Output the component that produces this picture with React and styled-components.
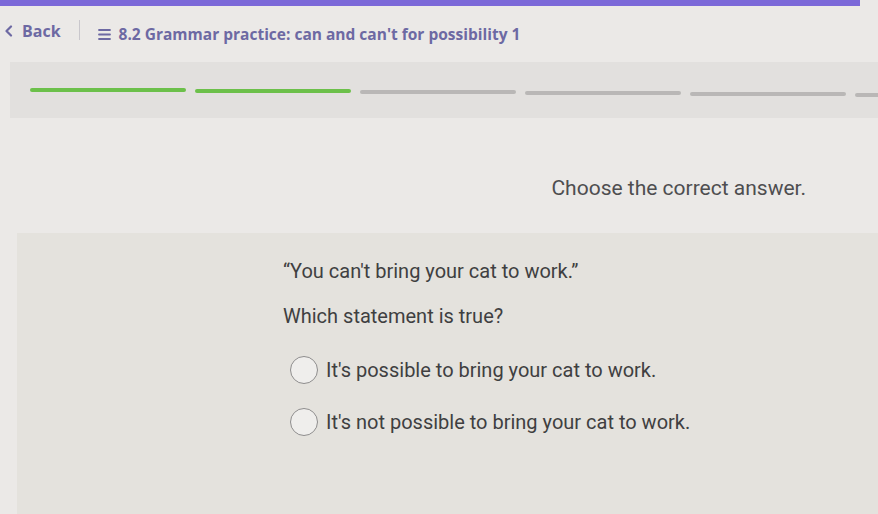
import React from "react";
import styled, { createGlobalStyle } from "styled-components";

const GlobalStyle = createGlobalStyle`
  html, body {
    margin: 0;
    padding: 0;
    background: #ebe9e7;
  }
  body {
    font-family: Roboto, "Liberation Sans", sans-serif;
    width: 878px;
    height: 514px;
    overflow: hidden;
  }
`;

const TopStripe = styled.div`
  height: 6px;
  width: 860px;
  background: #7b68d8;
`;

const Header = styled.header`
  height: 48px;
  display: flex;
  align-items: center;
  padding: 0 0 0 4px;
  font-family: "Open Sans", "Liberation Sans", sans-serif;
  font-weight: 700;
  color: #6d69a3;
`;

const BackLink = styled.a`
  display: flex;
  align-items: center;
  gap: 9px;
  font-size: 16px;
  color: #6d69a3;
  text-decoration: none;
  padding-top: 2px;
`;

const Divider = styled.span`
  width: 1px;
  height: 20px;
  background: #c9c7cc;
  margin: 0 18px 0 18px;
`;

const Title = styled.h1`
  display: flex;
  align-items: center;
  gap: 8px;
  margin: 0;
  font-size: 15.5px;
  font-weight: 700;
  padding-top: 8px;
`;

const ProgressBand = styled.div`
  margin: 8px 0 0 10px;
  height: 56px;
  background: #e2e0de;
  display: flex;
  align-items: center;
  gap: 9px;
  padding-left: 20px;
  overflow: hidden;
`;

const Segment = styled.div`
  flex: 0 0 156px;
  height: 4px;
  border-radius: 2px;
  margin-top: ${(p) => p.$offset}px;
  background: ${(p) => (p.$done ? "#6cc04a" : "#b9b7b6")};
`;

const Instruction = styled.p`
  margin: 58px 72px 0 0;
  text-align: right;
  font-size: 21px;
  color: #4e4e50;
`;

const Card = styled.section`
  margin: 33px 0 0 17px;
  height: 290px;
  background: #e4e2dd;
  padding: 26px 0 0 266px;
  box-sizing: border-box;
  color: #3f3f41;
  font-size: 20px;
`;

const Quote = styled.p`
  margin: 0;
`;

const Question = styled.p`
  margin: 21px 0 0;
`;

const Options = styled.div`
  margin-top: 28px;
  display: flex;
  flex-direction: column;
  gap: 24px;
  padding-left: 7px;
`;

const Option = styled.label`
  display: flex;
  align-items: center;
  gap: 8px;
  font-size: 20px;
  color: #3f3f41;
`;

const Radio = styled.span`
  width: 26px;
  height: 26px;
  border-radius: 50%;
  border: 1.5px solid #8e8d8d;
  background: #efeeec;
  flex: none;
`;

const segments = [true, true, false, false, false, false];

export default function App() {
  return (
    <>
      <GlobalStyle />
      <TopStripe />
      <Header>
        <BackLink href="#">
          <svg width="9" height="12" viewBox="0 0 9 12">
            <path d="M7 1.5 L2.5 6 L7 10.5" fill="none" stroke="#6d69a3" strokeWidth="2.2" strokeLinecap="round" strokeLinejoin="round" />
          </svg>
          Back
        </BackLink>
        <Divider />
        <Title>
          <svg width="13" height="13" viewBox="0 0 13 13">
            <path d="M1 2 H12 M1 6.5 H12 M1 11 H12" stroke="#6d69a3" strokeWidth="1.8" strokeLinecap="round" />
          </svg>
          8.2 Grammar practice: can and can't for possibility 1
        </Title>
      </Header>
      <ProgressBand>
        {segments.map((done, i) => (
          <Segment key={i} $done={done} $offset={i * 2} />
        ))}
      </ProgressBand>
      <Instruction>Choose the correct answer.</Instruction>
      <Card>
        <Quote>“You can't bring your cat to work.”</Quote>
        <Question>Which statement is true?</Question>
        <Options>
          <Option>
            <Radio />
            It's possible to bring your cat to work.
          </Option>
          <Option>
            <Radio />
            It's not possible to bring your cat to work.
          </Option>
        </Options>
      </Card>
    </>
  );
}
